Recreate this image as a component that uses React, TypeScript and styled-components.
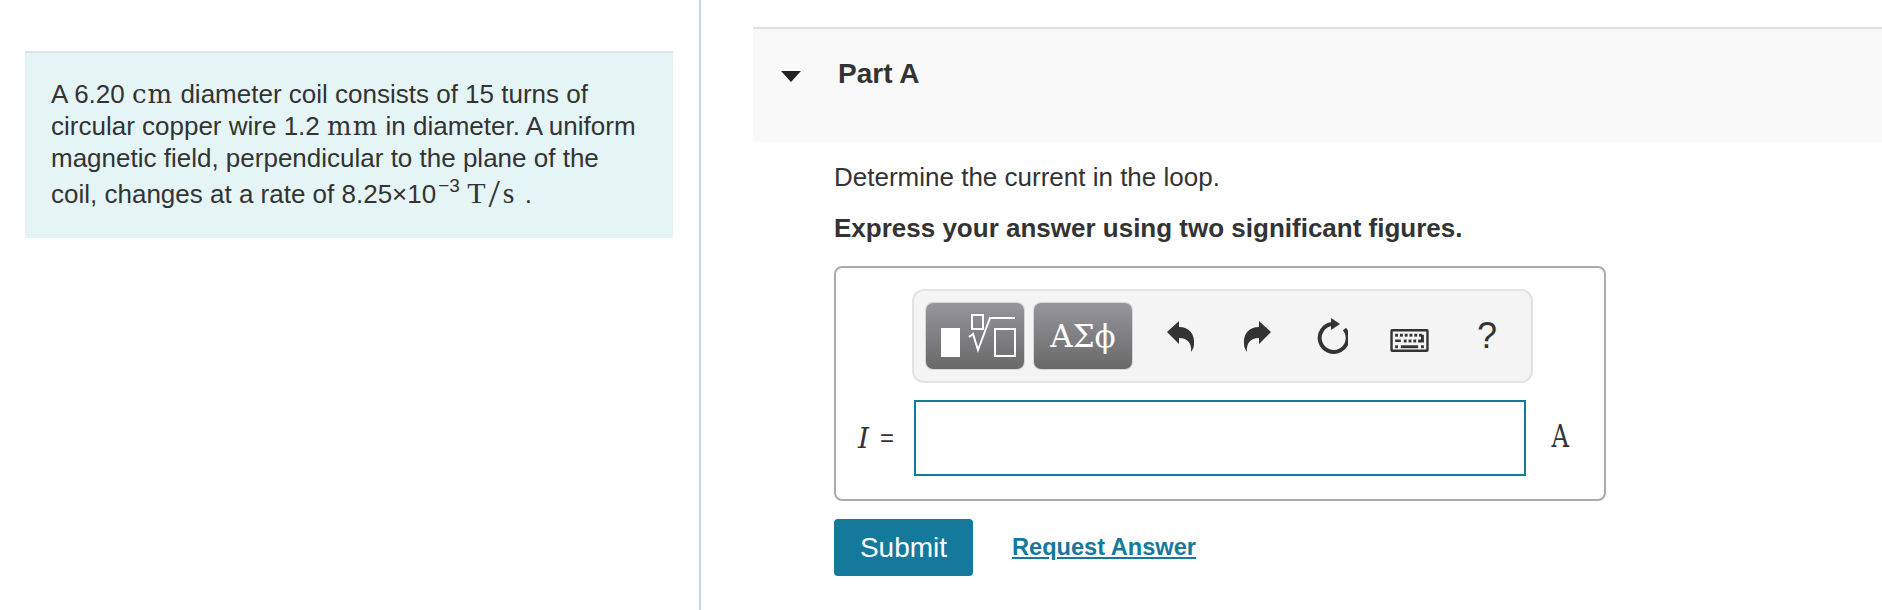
import React from 'react';
import styled, { createGlobalStyle } from 'styled-components';

const GlobalStyle = createGlobalStyle`
  html, body {
    margin: 0;
    padding: 0;
    background: #fff;
    overflow: hidden;
  }
  * {
    box-sizing: border-box;
  }
`;

const Page = styled.div`
  display: flex;
  width: 1882px;
  height: 610px;
  overflow: hidden;
  font-family: 'Liberation Sans', Arial, sans-serif;
  color: #333;
`;

const LeftColumn = styled.aside`
  width: 701px;
  flex: none;
  padding: 51px 26px 0 25px;
  border-right: 2px solid #c6d4e3;
`;

const IntroBox = styled.div`
  height: 187px;
  background: #e5f5f6;
  border-top: 2px solid #e0e0e0;
  padding: 25px 26px 0 26px;
  font-size: 26px;
  line-height: 32px;
`;

const LastLine = styled.span`
  display: block;
  margin-top: 4px;
`;

const Mathy = styled.span`
  font-family: 'DejaVu Serif', 'Liberation Serif', serif;
  font-size: 26px;
  line-height: 1;
  letter-spacing: 1px;
`;

const TallMath = styled.span`
  font-family: 'Liberation Serif', serif;
  font-size: 30px;
  line-height: 1;
  letter-spacing: 3px;
`;

const Slash = styled.span`
  font-size: 41px;
  font-weight: 400;
  line-height: 0;
  vertical-align: -4px;
`;

const Sup = styled.sup`
  margin-left: 2px;
  font-size: 19px;
  line-height: 0;
  vertical-align: 11px;
`;

const RightColumn = styled.main`
  flex: 1;
  min-width: 0;
  padding: 27px 0 0 52px;
`;

const PartHeader = styled.header`
  display: flex;
  align-items: flex-start;
  height: 115px;
  background: #f9f9f9;
  border-top: 2px solid #e0e0e0;
  padding: 29px 0 0 28px;
`;

const Caret = styled.span`
  width: 0;
  height: 0;
  margin-top: 13px;
  border-left: 10px solid transparent;
  border-right: 10px solid transparent;
  border-top: 11px solid #222;
`;

const PartTitle = styled.h2`
  margin: 0 0 0 37px;
  font-size: 28px;
  line-height: 32px;
  font-weight: 700;
`;

const PartBody = styled.div`
  padding: 19px 0 0 81px;
  width: 853px;
`;

const Question = styled.p`
  margin: 0;
  font-size: 26px;
  line-height: 32px;
`;

const Instruction = styled.p`
  margin: 19px 0 0;
  font-size: 26px;
  line-height: 32px;
  font-weight: 700;
`;

const AnswerBox = styled.div`
  width: 772px;
  height: 235px;
  margin-top: 22px;
  padding: 21px 0 0 22px;
  border: 2px solid #aaa;
  border-radius: 8px;
`;

const Toolbar = styled.div`
  display: flex;
  align-items: center;
  width: 621px;
  height: 94px;
  margin-left: 54px;
  padding: 0 0 0 12px;
  background: #f4f4f4;
  border: 2px solid #e2e2e2;
  border-radius: 12px;
`;

const TemplateButton = styled.button`
  display: flex;
  align-items: center;
  justify-content: center;
  width: 98px;
  height: 66px;
  margin-right: 10px;
  padding: 0;
  border: none;
  border-radius: 7px;
  background: linear-gradient(#96959c, #696969);
  box-shadow: 0 0 0 1px #d6d6d6;
  color: #fff;
  font-family: 'DejaVu Serif', 'Liberation Serif', serif;
  font-size: 31px;
`;

const IconButton = styled.button<{ $width: number }>`
  display: flex;
  align-items: center;
  justify-content: center;
  width: ${({ $width }) => $width}px;
  height: 66px;
  padding: 0;
  border: none;
  background: none;
  color: #333;
  font-family: 'Liberation Sans', Arial, sans-serif;
  font-size: 36px;
`;

const AnswerRow = styled.div`
  display: flex;
  align-items: center;
  margin-top: 17px;
`;

const VarLabel = styled.label`
  display: flex;
  align-items: center;
  width: 56px;
  flex: none;
  font-size: 24px;
`;

const VarName = styled.i`
  font-family: 'DejaVu Serif', serif;
  font-size: 28px;
  margin-right: 11px;
`;

const AnswerInput = styled.input`
  width: 612px;
  height: 76px;
  border: 2px solid #14799b;
  background: #fff;
  outline: none;
`;

const Unit = styled.span`
  margin: 0 0 4px 23px;
  font-family: 'DejaVu Serif', 'Liberation Serif', serif;
  font-size: 31px;
  transform: scaleX(0.78);
`;

const ActionRow = styled.div`
  display: flex;
  align-items: center;
  margin-top: 18px;
`;

const SubmitButton = styled.button`
  width: 139px;
  height: 57px;
  border: none;
  border-radius: 4px;
  background: #14799b;
  color: #fff;
  font-family: 'Liberation Sans', Arial, sans-serif;
  font-size: 28px;
`;

const RequestLink = styled.a`
  margin-left: 39px;
  color: #14799b;
  font-size: 23.6px;
  font-weight: 700;
  text-decoration: underline;
`;

const KeyboardSlot = styled.span`
  display: flex;
  margin-top: 8px;
`;

const TemplatesIcon = () => (
  <svg width="81" height="44" viewBox="-6 0 81 44" fill="none" stroke="#fff" strokeWidth="2">
    <rect x="0" y="14" width="19" height="29" fill="#fff" stroke="none" />
    <rect x="31" y="1" width="11" height="14" />
    <path d="M28 23 L32 20 L37 36 L49 4 L74 4" />
    <rect x="54" y="15" width="20" height="27" />
  </svg>
);

const UndoIcon = () => (
  <svg width="28" height="32" viewBox="0 0 28 32" fill="#333">
    <path d="M0 12 L12 1 V7 C22 7 28 14 27 24 C27 27 26 29 24 32 C25 24 21 18 12 18 V24 Z" />
  </svg>
);

const RedoIcon = () => (
  <svg width="28" height="32" viewBox="0 0 28 32" fill="#333">
    <path d="M28 12 L16 1 V7 C6 7 0 14 1 24 C1 27 2 29 4 32 C3 24 7 18 16 18 V24 Z" />
  </svg>
);

const ResetIcon = () => (
  <svg width="32" height="36" viewBox="0 0 32 36" fill="none">
    <path d="M28.5 11 A14 14 0 1 1 16 6" stroke="#333" strokeWidth="4" />
    <path d="M15 0 L24 6 L15 12 Z" fill="#333" />
  </svg>
);

const KeyboardIcon = () => (
  <svg width="39" height="23" viewBox="0 0 40 24" fill="#333">
    <path fillRule="evenodd" d="M2 0 H38 A2 2 0 0 1 40 2 V22 A2 2 0 0 1 38 24 H2 A2 2 0 0 1 0 22 V2 A2 2 0 0 1 2 0 Z M2.5 2.5 V21.5 H37.5 V2.5 Z" />
    {[5, 10, 15, 20, 25, 30].map((x) => <rect key={x} x={x} y="5" width="3" height="3" />)}
    <rect x="5" y="11" width="6" height="2.5" />
    {[14, 19, 24].map((x) => <rect key={x} x={x} y="11" width="3" height="3" />)}
    <path d="M29 11 H32 V6 H35 V14 H29 Z" />
    <rect x="5" y="17" width="3" height="3" />
    <rect x="11" y="17" width="18" height="3" />
    <rect x="32" y="17" width="3" height="3" />
  </svg>
);

const App: React.FC = () => (
  <Page>
    <GlobalStyle />
    <LeftColumn>
      <IntroBox>
        A 6.20 <Mathy>cm</Mathy> diameter coil consists of 15 turns of circular copper wire 1.2 <Mathy>mm</Mathy> in
        diameter. A uniform magnetic field, perpendicular to the plane of the
        <LastLine>
          coil, changes at a rate of 8.25×10<Sup>−3</Sup> <TallMath>T<Slash>/</Slash>s</TallMath> .
        </LastLine>
      </IntroBox>
    </LeftColumn>
    <RightColumn>
      <PartHeader>
        <Caret />
        <PartTitle>Part A</PartTitle>
      </PartHeader>
      <PartBody>
        <Question>Determine the current in the loop.</Question>
        <Instruction>Express your answer using two significant figures.</Instruction>
        <AnswerBox>
          <Toolbar>
            <TemplateButton aria-label="Templates"><TemplatesIcon /></TemplateButton>
            <TemplateButton>ΑΣϕ</TemplateButton>
            <IconButton $width={78} aria-label="Undo"><UndoIcon /></IconButton>
            <IconButton $width={74} aria-label="Redo"><RedoIcon /></IconButton>
            <IconButton $width={76} aria-label="Reset"><ResetIcon /></IconButton>
            <IconButton $width={78} aria-label="Keyboard"><KeyboardSlot><KeyboardIcon /></KeyboardSlot></IconButton>
            <IconButton $width={78} aria-label="Help">?</IconButton>
          </Toolbar>
          <AnswerRow>
            <VarLabel><VarName>I</VarName>=</VarLabel>
            <AnswerInput aria-label="Answer" />
            <Unit>A</Unit>
          </AnswerRow>
        </AnswerBox>
        <ActionRow>
          <SubmitButton>Submit</SubmitButton>
          <RequestLink href="#">Request Answer</RequestLink>
        </ActionRow>
      </PartBody>
    </RightColumn>
  </Page>
);

export default App;
